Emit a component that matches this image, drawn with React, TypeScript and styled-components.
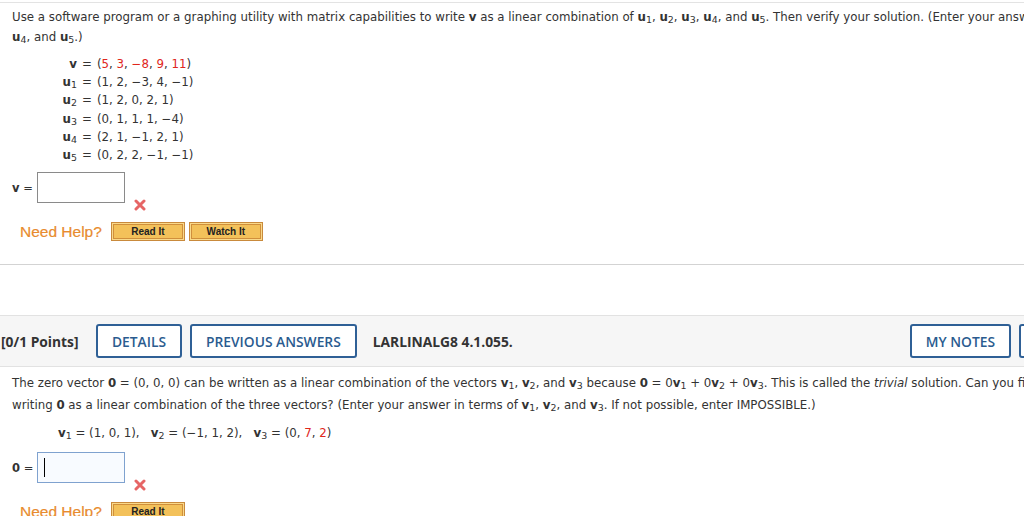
import React from 'react';
import styled, { createGlobalStyle } from 'styled-components';

const GlobalStyle = createGlobalStyle`
    html, body {
        margin: 0;
        padding: 0;
        background: #ffffff;
        overflow: hidden;
    }
`;

const Sub = ({ children }: { children: React.ReactNode }) => <SubText>{children}</SubText>;

const U = ({ n }: { n: number }) => (
    <>
        <B>u</B>
        <Sub>{n}</Sub>
    </>
);

const V = ({ n }: { n?: number }) => (
    <>
        <B>v</B>
        {n !== undefined && <Sub>{n}</Sub>}
    </>
);

const CrossMark = () => (
    <Cross viewBox="0 0 12 12">
        <path d="M2 2 L10 10 M10 2 L2 10" stroke="#e66565" strokeWidth="3" strokeLinecap="round" />
    </Cross>
);

const HelpRow = ({ watch }: { watch?: boolean }) => (
    <Help>
        <HelpLabel>Need Help?</HelpLabel>
        <HelpButton>Read It</HelpButton>
        {watch && <HelpButton>Watch It</HelpButton>}
    </Help>
);

export default function App() {
    const vectors: { label: React.ReactNode; values: React.ReactNode }[] = [
        {
            label: <V />,
            values: (
                <>
                    (<Red>5</Red>, <Red>3</Red>, <Red>−8</Red>, <Red>9</Red>, <Red>11</Red>)
                </>
            ),
        },
        { label: <U n={1} />, values: '(1, 2, −3, 4, −1)' },
        { label: <U n={2} />, values: '(1, 2, 0, 2, 1)' },
        { label: <U n={3} />, values: '(0, 1, 1, 1, −4)' },
        { label: <U n={4} />, values: '(2, 1, −1, 2, 1)' },
        { label: <U n={5} />, values: '(0, 2, 2, −1, −1)' },
    ];

    return (
        <Page>
            <GlobalStyle />
            <Question>
                <Prompt>
                    Use a software program or a graphing utility with matrix capabilities to write <B>v</B> as a linear
                    combination of <U n={1} />, <U n={2} />, <U n={3} />, <U n={4} />, and <U n={5} />. Then verify your
                    solution. (Enter your answer in terms of <U n={1} />, <U n={2} />, <U n={3} />,
                    <br />
                    <U n={4} />, and <U n={5} />.)
                </Prompt>
                <VectorList>
                    {vectors.map((v, i) => (
                        <React.Fragment key={i}>
                            <VecLabel>{v.label}</VecLabel>
                            <span>=</span>
                            <span>{v.values}</span>
                        </React.Fragment>
                    ))}
                </VectorList>
                <AnswerRow>
                    <AnswerLabel>
                        <B>v</B> =
                    </AnswerLabel>
                    <AnswerInput />
                    <CrossMark />
                </AnswerRow>
                <HelpRow watch />
            </Question>
            <Separator />
            <HeaderBar>
                <Points>[0/1 Points]</Points>
                <HeaderButton>DETAILS</HeaderButton>
                <HeaderButton>PREVIOUS ANSWERS</HeaderButton>
                <Code>LARLINALG8 4.1.055.</Code>
                <Spacer />
                <HeaderButton>MY NOTES</HeaderButton>
                <HeaderButton>ASK YOUR TEACHER</HeaderButton>
            </HeaderBar>
            <Question2>
                <Prompt2>
                    The zero vector <B>0</B> = (0, 0, 0) can be written as a linear combination of the vectors <V n={1} />,{' '}
                    <V n={2} />, and <V n={3} /> because <B>0</B> = 0<V n={1} /> + 0<V n={2} /> + 0<V n={3} />. This is
                    called the <i>trivial</i> solution. Can you find a nontrivial way of
                    <br />
                    writing <B>0</B> as a linear combination of the three vectors? (Enter your answer in terms of{' '}
                    <V n={1} />, <V n={2} />, and <V n={3} />. If not possible, enter IMPOSSIBLE.)
                </Prompt2>
                <GivenRow>
                    <V n={1} /> = (1, 0, 1),&nbsp;&nbsp; <V n={2} /> = (−1, 1, 2),&nbsp;&nbsp; <V n={3} /> = (0,{' '}
                    <Red>7</Red>, <Red>2</Red>)
                </GivenRow>
                <AnswerRow>
                    <AnswerLabel>
                        <B>0</B> =
                    </AnswerLabel>
                    <AnswerInput $focused>
                        <Caret />
                    </AnswerInput>
                    <CrossMark />
                </AnswerRow>
                <HelpRow />
            </Question2>
        </Page>
    );
}

const Page = styled.div`
    width: 1024px;
    height: 516px;
    overflow: hidden;
    background: #ffffff;
    padding-top: 2px;
    box-sizing: border-box;
`;

const Question = styled.section`
    width: 1200px;
    border-top: 1px solid #e3e3e3;
    padding: 4px 0 0 12px;
    font-family: 'DejaVu Sans', Verdana, sans-serif;
    font-size: 11.8px;
    color: #333333;
`;

const Prompt = styled.div`
    line-height: 20px;
    white-space: nowrap;
`;

const B = styled.b`
    font-weight: bold;
`;

const SubText = styled.sub`
    font-size: 0.8em;
    line-height: 0;
    vertical-align: -0.25em;
`;

const Red = styled.span`
    color: #e0261c;
`;

const VectorList = styled.div`
    display: grid;
    grid-template-columns: 16px auto 1fr;
    column-gap: 5px;
    margin: 8px 0 0 49px;
    line-height: 18.2px;
    white-space: nowrap;
`;

const VecLabel = styled.span`
    text-align: right;
`;

const AnswerRow = styled.div`
    display: flex;
    align-items: center;
    margin-top: 8px;
    height: 31px;
`;

const AnswerLabel = styled.span`
    width: 25px;
    font-size: 11.5px;
    white-space: nowrap;
`;

const AnswerInput = styled.div<{ $focused?: boolean }>`
    width: 88px;
    height: 31px;
    box-sizing: border-box;
    border: 1px solid ${(p) => (p.$focused ? '#7fa2cf' : '#8a8a8a')};
    background: ${(p) => (p.$focused ? '#f8fbff' : '#ffffff')};
    display: flex;
    align-items: center;
    padding-left: 6px;
`;

const Caret = styled.span`
    display: block;
    width: 1px;
    height: 19px;
    background: #000000;
`;

const Cross = styled.svg`
    width: 12px;
    height: 12px;
    align-self: flex-end;
    margin: 0 0 -8px 9px;
`;

const Help = styled.div`
    display: flex;
    align-items: center;
    height: 19px;
    margin-top: 19px;
    padding-left: 8px;
    gap: 4px;
`;

const HelpLabel = styled.span`
    font-family: 'Liberation Sans', Arial, sans-serif;
    font-size: 15.5px;
    color: #e88b2e;
    margin-right: 5px;
    -webkit-text-stroke: 0.2px #e88b2e;
`;

const HelpButton = styled.span`
    width: 74px;
    height: 19px;
    box-sizing: border-box;
    border: 1px solid #c98a3c;
    box-shadow: inset 0 0 0 1px #f9d98a, inset 0 0 0 2px #d08f3c;
    background: #f3c15a;
    font-family: 'Liberation Sans', Arial, sans-serif;
    font-size: 10px;
    font-weight: bold;
    color: #222222;
    display: flex;
    align-items: center;
    justify-content: center;
`;

const Separator = styled.hr`
    margin: 23px 0 0;
    border: 0;
    border-top: 1px solid #d3d3d3;
    height: 0;
`;

const HeaderBar = styled.header`
    margin-top: 50px;
    height: 52px;
    box-sizing: border-box;
    width: 1200px;
    background: #f6f6f6;
    border-top: 1px solid #e2e2e2;
    border-bottom: 1px solid #e2e2e2;
    display: flex;
    align-items: center;
    gap: 8px;
    font-family: 'Open Sans', sans-serif;
    font-size: 13.8px;
    white-space: nowrap;

    & > * {
        flex-shrink: 0;
    }
`;

const Points = styled.span`
    font-weight: bold;
    color: #333333;
    margin-right: 8px;
    margin-left: 1px;
    width: 79px;
`;

const HeaderButton = styled.span`
    height: 34px;
    box-sizing: border-box;
    padding: 0 14px;
    border: 2px solid #2f6096;
    border-radius: 3px;
    background: #ffffff;
    color: #2a5b8f;
    font-weight: 600;
    display: flex;
    align-items: center;
`;

const Code = styled.span`
    font-weight: bold;
    color: #333333;
    margin-left: 8px;
`;

const Spacer = styled.span`
    width: 381px;
`;

const Question2 = styled.section`
    padding-left: 12px;
    font-family: 'DejaVu Sans', Verdana, sans-serif;
    font-size: 11.8px;
    color: #333333;
`;

const Prompt2 = styled.div`
    margin-top: 5px;
    line-height: 22px;
    white-space: nowrap;
`;

const GivenRow = styled.div`
    margin: 6px 0 0 46px;
    line-height: 22px;
    white-space: nowrap;
`;
